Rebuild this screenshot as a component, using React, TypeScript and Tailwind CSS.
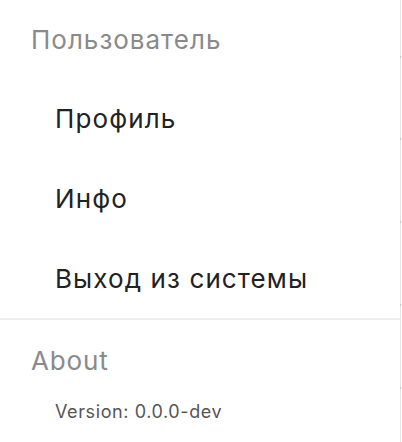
const SECTIONS = [
  {
    title: "Пользователь",
    items: ["Профиль", "Инфо", "Выход из системы"],
  },
];

const TICKS = [56, 80, 81, 81, 81, 57];

function EdgeStrip() {
  return (
    <div className="flex w-px flex-col bg-[#e6e6e6]">
      {TICKS.map((h, i) => (
        <div key={i} className="flex flex-col">
          {i > 0 && <div className="h-[2px] bg-[#c4c4c4]" />}
          <div style={{ height: h }} />
        </div>
      ))}
    </div>
  );
}

export default function App() {
  return (
    <div className="flex h-[442px] w-[402px] bg-white font-['Inter','Noto_Sans',sans-serif]">
      <div className="flex w-[400px] flex-col rounded-br-md bg-white">
        {SECTIONS.map((section) => (
          <div key={section.title} className="flex flex-col">
            <div className="flex h-[78px] items-center pl-[31px] text-[26px] tracking-[1px] text-[#8a8a8a]">
              {section.title}
            </div>
            {section.items.map((item) => (
              <div key={item} className="flex h-[80px] items-center pl-[55px] text-[26px] tracking-[1.1px] text-[#222222]">
                {item}
              </div>
            ))}
          </div>
        ))}
        <div className="h-[2px] bg-[#efefef]" />
        <div className="flex h-[80px] items-center pl-[31px] text-[26px] tracking-[0.85px] text-[#8a8a8a]">
          About
        </div>
        <div className="flex h-[22px] items-center pl-[55px] text-[18px] tracking-[0.6px] text-[#555555]">
          Version: 0.0.0-dev
        </div>
      </div>
      <EdgeStrip />
      <div className="w-px bg-white" />
    </div>
  );
}
